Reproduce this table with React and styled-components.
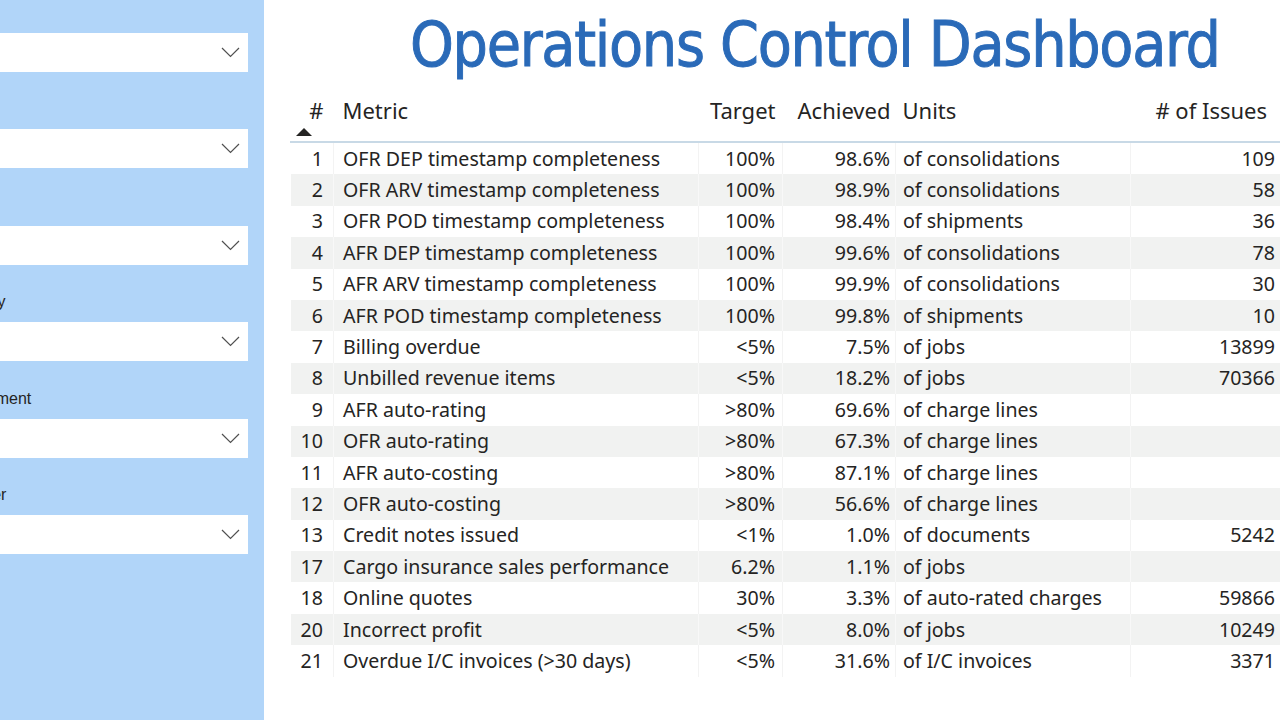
import React from "react";
import styled, { createGlobalStyle } from "styled-components";

const GlobalStyle = createGlobalStyle`
  html, body {
    margin: 0;
    padding: 0;
    background: #fff;
  }
  body {
    font-family: "Noto Sans", "Open Sans", sans-serif;
    color: #252423;
  }
`;

const Page = styled.div`
  display: flex;
  width: 1280px;
  height: 720px;
  overflow: hidden;
  background: #fff;
`;

const Sidebar = styled.aside`
  width: 264px;
  flex-shrink: 0;
  background: #b1d5f9;
  overflow: hidden;
`;

const FilterList = styled.div`
  display: flex;
  flex-direction: column;
  margin-left: -71px;
  padding: 3px 16px 0 8px;
  gap: 27.4px;
`;

const FilterGroup = styled.div`
  display: flex;
  flex-direction: column;
  gap: 10px;
`;

const FilterLabel = styled.div`
  font-family: "Liberation Sans", Arial, sans-serif;
  font-size: 16px;
  line-height: 20px;
  color: #252423;
  white-space: nowrap;
`;

const Dropdown = styled.div`
  height: 39px;
  background: #fff;
  display: flex;
  align-items: center;
  justify-content: flex-end;
  padding-right: 8px;
`;

const Main = styled.main`
  flex: 1;
  display: flex;
  flex-direction: column;
  padding-left: 26px;
`;

const Title = styled.h1`
  margin: 0;
  padding: 10px 0 0 120px;
  height: 97px;
  box-sizing: border-box;
  font-family: "DejaVu Sans Condensed", "DejaVu Sans", sans-serif;
  font-weight: 400;
  font-size: 62px;
  letter-spacing: -1.3px;
  line-height: 70px;
  color: #2a6ab8;
  -webkit-text-stroke: 0.9px #2a6ab8;
  white-space: nowrap;
`;

const Table = styled.table`
  border-collapse: collapse;
  width: 990px;
  table-layout: fixed;
  font-size: 19.6px;
`;

const HeadCell = styled.th`
  font-weight: 400;
  font-size: 22px;
  text-align: ${(p) => p.$align || "left"};
  vertical-align: top;
  padding: 0 ${(p) => p.$pr ?? 7}px 0 ${(p) => p.$pl ?? 7}px;
  height: 44px;
  line-height: 26px;
  border-bottom: 2px solid #c8d9e6;
  white-space: nowrap;
`;

const SortArrow = styled.div`
  width: 0;
  height: 0;
  margin: 5px 0 0 -2px;
  border-left: 8px solid transparent;
  border-right: 8px solid transparent;
  border-bottom: 8px solid #252423;
`;

const Row = styled.tr`
  background: ${(p) => (p.$alt ? "#f1f2f1" : "#fff")};
`;

const Cell = styled.td`
  height: 31.4px;
  padding: 0 ${(p) => p.$pr ?? 7}px 0 ${(p) => p.$pl ?? 7}px;
  text-align: ${(p) => p.$align || "left"};
  line-height: 20px;
  white-space: nowrap;
  overflow: hidden;
  border-left: 1px solid ${(p) => (p.$first ? "transparent" : p.$alt ? "#f8f8f8" : "#f3f3f3")};
`;

const Chevron = () => (
  <svg width="19" height="11" viewBox="0 0 19 11">
    <polyline points="1,1 9.5,9.5 18,1" fill="none" stroke="#505050" strokeWidth="1.2" />
  </svg>
);

const filters = ["Region", "Branch", "Month", "Company", "Consignment", "Customer"];

const rows = [
  [1, "OFR DEP timestamp completeness", "100%", "98.6%", "of consolidations", "109"],
  [2, "OFR ARV timestamp completeness", "100%", "98.9%", "of consolidations", "58"],
  [3, "OFR POD timestamp completeness", "100%", "98.4%", "of shipments", "36"],
  [4, "AFR DEP timestamp completeness", "100%", "99.6%", "of consolidations", "78"],
  [5, "AFR ARV timestamp completeness", "100%", "99.9%", "of consolidations", "30"],
  [6, "AFR POD timestamp completeness", "100%", "99.8%", "of shipments", "10"],
  [7, "Billing overdue", "<5%", "7.5%", "of jobs", "13899"],
  [8, "Unbilled revenue items", "<5%", "18.2%", "of jobs", "70366"],
  [9, "AFR auto-rating", ">80%", "69.6%", "of charge lines", ""],
  [10, "OFR auto-rating", ">80%", "67.3%", "of charge lines", ""],
  [11, "AFR auto-costing", ">80%", "87.1%", "of charge lines", ""],
  [12, "OFR auto-costing", ">80%", "56.6%", "of charge lines", ""],
  [13, "Credit notes issued", "<1%", "1.0%", "of documents", "5242"],
  [17, "Cargo insurance sales performance", "6.2%", "1.1%", "of jobs", ""],
  [18, "Online quotes", "30%", "3.3%", "of auto-rated charges", "59866"],
  [20, "Incorrect profit", "<5%", "8.0%", "of jobs", "10249"],
  [21, "Overdue I/C invoices (>30 days)", "<5%", "31.6%", "of I/C invoices", "3371"],
];

export default function App() {
  return (
    <Page>
      <GlobalStyle />
      <Sidebar>
        <FilterList>
          {filters.map((f) => (
            <FilterGroup key={f}>
              <FilterLabel>{f}</FilterLabel>
              <Dropdown>
                <Chevron />
              </Dropdown>
            </FilterGroup>
          ))}
        </FilterList>
      </Sidebar>
      <Main>
        <Title>Operations Control Dashboard</Title>
        <Table>
          <colgroup>
            <col style={{ width: 43 }} />
            <col style={{ width: 365 }} />
            <col style={{ width: 84 }} />
            <col style={{ width: 113 }} />
            <col style={{ width: 235 }} />
            <col />
          </colgroup>
          <thead>
            <tr>
              <HeadCell $align="right" $pr={10}>
                #
                <SortArrow />
              </HeadCell>
              <HeadCell $pl={9}>Metric</HeadCell>
              <HeadCell $align="right">Target</HeadCell>
              <HeadCell $align="right" $pr={5}>Achieved</HeadCell>
              <HeadCell>Units</HeadCell>
              <HeadCell $align="right" $pr={13}># of Issues</HeadCell>
            </tr>
          </thead>
          <tbody>
            {rows.map((r, i) => {
              const alt = i % 2 === 1;
              return (
                <Row key={r[0]} $alt={alt}>
                  <Cell $align="right" $pr={10} $first $alt={alt}>{r[0]}</Cell>
                  <Cell $pl={9} $alt={alt}>{r[1]}</Cell>
                  <Cell $align="right" $alt={alt}>{r[2]}</Cell>
                  <Cell $align="right" $pr={5} $alt={alt}>{r[3]}</Cell>
                  <Cell $alt={alt}>{r[4]}</Cell>
                  <Cell $align="right" $pr={5} $alt={alt}>{r[5]}</Cell>
                </Row>
              );
            })}
          </tbody>
        </Table>
      </Main>
    </Page>
  );
}
